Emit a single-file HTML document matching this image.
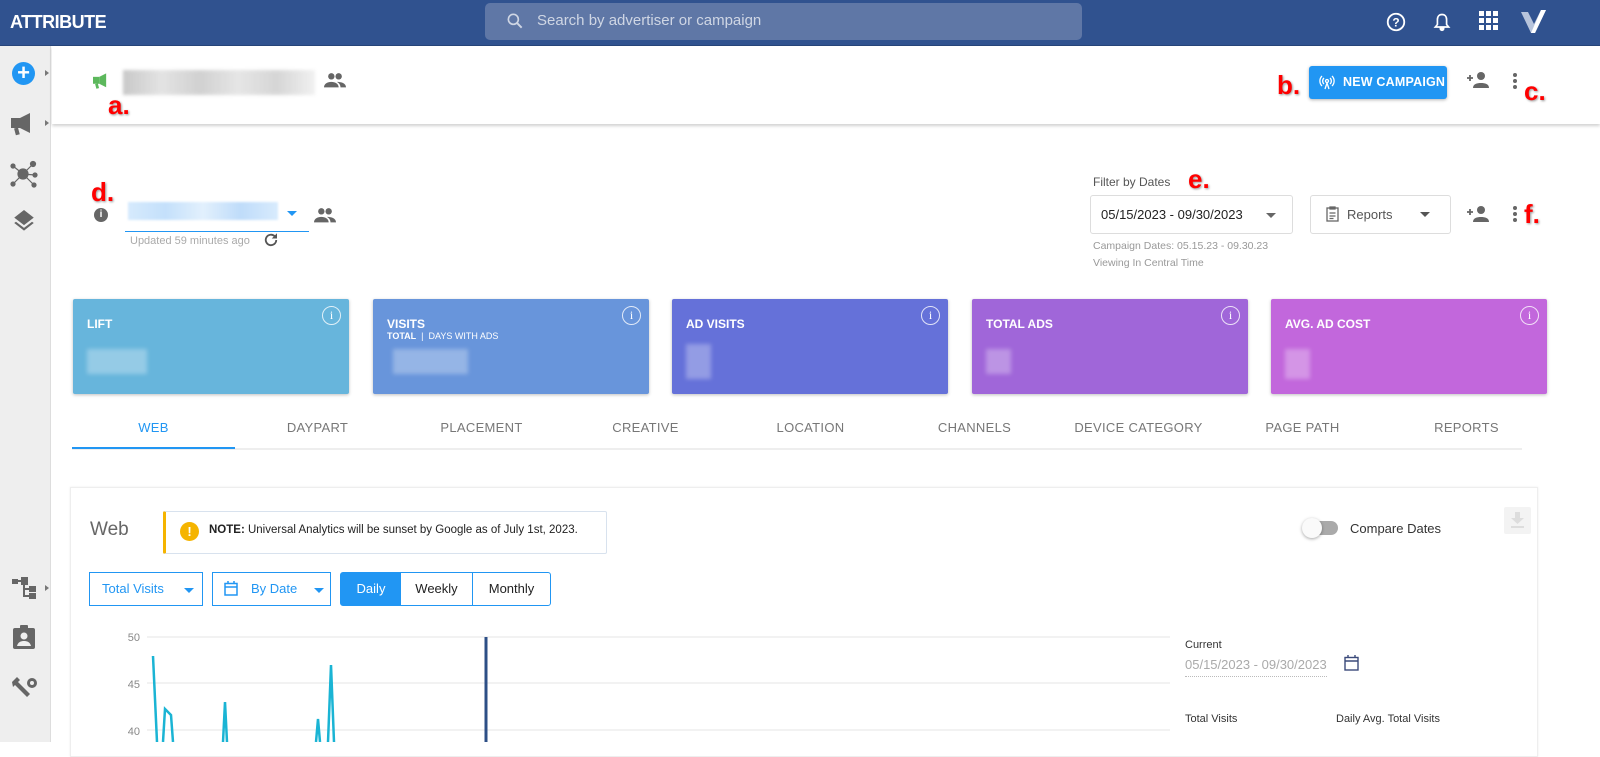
<!DOCTYPE html>
<html><head><meta charset="utf-8"><style>
*{box-sizing:border-box;margin:0;padding:0}
body{width:1600px;height:742px;overflow:hidden;font-family:"Liberation Sans",sans-serif;background:#fff;position:relative;color:#333}
.abs{position:absolute;white-space:nowrap}
.top{left:0;top:0;width:1600px;height:46px;background:#30528f;border-bottom:1px solid #27457a}
.side{left:0;top:46px;width:51px;height:696px;background:#eeeeee;border-right:1px solid #ddd}
.red{color:#f00;font-weight:bold;font-size:26px;text-shadow:1px 1px 2px #999}
.card{top:299px;width:276px;height:95px;border-radius:2px;box-shadow:0 1px 3px rgba(0,0,0,.25);color:#fff}
.card b{position:absolute;left:14px;top:18px;font-size:12px}
.card .i{position:absolute;right:8px;top:7px;width:19px;height:19px;border:1.5px solid rgba(255,255,255,.8);border-radius:50%;font-size:12px;text-align:center;line-height:16px;font-family:"Liberation Serif",serif}
.card .blur{position:absolute;left:14px;top:50px;width:60px;height:25px;background:rgba(255,255,255,.3);filter:blur(2px)}
.tab{top:420px;font-size:13px;color:#777;letter-spacing:.3px;text-align:center;width:163px}
.btn{border:1px solid #2196f3;height:34px;font-size:13px;line-height:32px}
</style></head><body>
<div class="abs top"></div>
<div class="abs" style="left:10px;top:12px;color:#fff;font-size:18px;font-weight:bold;letter-spacing:-.5px">ATTRIBUTE</div>
<div class="abs" style="left:485px;top:3px;width:597px;height:37px;background:#5f77a6;border-radius:5px"></div>
<svg class="abs" style="left:505px;top:11px" width="20" height="20" viewBox="0 0 24 24"><circle cx="10" cy="10" r="6" fill="none" stroke="#cfd6e4" stroke-width="2"/><path d="M14.5 14.5L20 20" stroke="#cfd6e4" stroke-width="2.3"/></svg>
<div class="abs" style="left:537px;top:12px;color:#cfd6e4;font-size:15px">Search by advertiser or campaign</div>
<svg class="abs" style="left:1385px;top:11px" width="22" height="22" viewBox="0 0 24 24"><circle cx="12" cy="12" r="9" fill="none" stroke="#fff" stroke-width="2"/><text x="12" y="17" font-size="13" fill="#fff" text-anchor="middle" font-family="Liberation Sans" font-weight="bold">?</text></svg>
<svg class="abs" style="left:1432px;top:11px" width="20" height="22" viewBox="0 0 24 24"><path d="M12 3c-3.5 0-5.5 2.5-5.5 6v6L4 18h16l-2.5-3V9c0-3.5-2-6-5.5-6zM10 20h4a2 2 0 01-4 0z" fill="none" stroke="#fff" stroke-width="2"/></svg>
<svg class="abs" style="left:1479px;top:11px" width="20" height="20" viewBox="0 0 20 20" fill="#fff"><rect x="0" y="0" width="5" height="5"/><rect x="7" y="0" width="5" height="5"/><rect x="14" y="0" width="5" height="5"/><rect x="0" y="7" width="5" height="5"/><rect x="7" y="7" width="5" height="5"/><rect x="14" y="7" width="5" height="5"/><rect x="0" y="14" width="5" height="5"/><rect x="7" y="14" width="5" height="5"/><rect x="14" y="14" width="5" height="5"/></svg>
<svg class="abs" style="left:1521px;top:10px" width="26" height="24" viewBox="0 0 26 24"><path d="M0 2h7l6 12 7-14h5L14 23h-4z" fill="#b7c4dc"/><path d="M10 23L20 0h5L14 23z" fill="#fff"/></svg>

<div class="abs side"></div>
<div class="abs" style="left:12px;top:62px;width:23px;height:23px;border-radius:50%;background:#2196f3;color:#fff;font-size:22px;line-height:22px;text-align:center;font-weight:bold">+</div>
<div class="abs" style="left:45px;top:70px;border-left:4px solid #777;border-top:3px solid transparent;border-bottom:3px solid transparent"></div>
<svg class="abs" style="left:10px;top:111px" width="28" height="26" viewBox="0 0 28 26" fill="#666"><rect x="1" y="7" width="9" height="10"/><path d="M10 7l10-5v20l-10-5z"/><rect x="4" y="17" width="4" height="7" transform="rotate(-15 6 17)"/></svg>
<div class="abs" style="left:45px;top:120px;border-left:4px solid #777;border-top:3px solid transparent;border-bottom:3px solid transparent"></div>
<svg class="abs" style="left:9px;top:160px" width="30" height="30" viewBox="0 0 30 30" fill="#666" stroke="#666" stroke-width="1.2"><circle cx="14" cy="14" r="5"/><circle cx="24" cy="4" r="2.5"/><circle cx="4" cy="6" r="2"/><circle cx="4" cy="24" r="2"/><circle cx="26" cy="15" r="2"/><circle cx="25" cy="25" r="2"/><path d="M14 14L24 4M14 14L4 6M14 14L4 24M14 14L26 15M14 14L25 25" fill="none"/></svg>
<svg class="abs" style="left:11px;top:210px" width="26" height="26" viewBox="0 0 24 24" fill="#666"><path d="M12 16.5l-7.4-5.7L3 12l9 7 9-7-1.6-1.2zM12 14l9-7-9-7-9 7z"/></svg>
<svg class="abs" style="left:12px;top:577px" width="26" height="22" viewBox="0 0 26 22" fill="#666"><rect x="0" y="2" width="6" height="5"/><rect x="9" y="0" width="7" height="8"/><rect x="17" y="9" width="7" height="6"/><rect x="17" y="16" width="7" height="6"/><path d="M6 4h4M12 8v11h5M12 12h5" stroke="#666" stroke-width="2" fill="none"/></svg>
<div class="abs" style="left:45px;top:585px;border-left:4px solid #777;border-top:3px solid transparent;border-bottom:3px solid transparent"></div>
<svg class="abs" style="left:13px;top:625px" width="22" height="24" viewBox="0 0 22 24" fill="#666"><rect x="0" y="3" width="22" height="21" rx="2"/><rect x="7" y="0" width="8" height="6" rx="1"/><circle cx="11" cy="11" r="3.5" fill="#eee"/><path d="M4 21c1-4 4-5 7-5s6 1 7 5z" fill="#eee"/></svg>
<svg class="abs" style="left:9px;top:674px" width="30" height="26" viewBox="0 0 30 26" fill="#666"><path d="M3 8l5-5 3 3-2 2 12 12-3 3L6 11 4 13z"/><circle cx="23" cy="9" r="5"/><circle cx="23" cy="9" r="2" fill="#eee"/></svg>

<div class="abs" style="left:52px;top:46px;width:1548px;height:78px;background:#fff;box-shadow:0 2px 3px rgba(0,0,0,.18)"></div>
<svg class="abs" style="left:92px;top:72px" width="20" height="18" viewBox="0 0 28 26" fill="#5cb85c"><rect x="1" y="7" width="9" height="10"/><path d="M10 7l10-5v20l-10-5z"/><rect x="4" y="17" width="4" height="7" transform="rotate(-15 6 17)"/></svg>
<div class="abs" style="left:123px;top:70px;width:192px;height:25px;background:linear-gradient(90deg,#bbb,#ddd,#c6c6c6,#e0e0e0,#ccc,#eee);filter:blur(1.5px);opacity:.8"></div>
<svg class="abs" style="left:324px;top:72px" width="22" height="16" viewBox="0 0 24 16" fill="#666"><circle cx="8" cy="4" r="3.5"/><circle cx="16" cy="4" r="3.5"/><path d="M0 16c0-4 4-6 8-6s8 2 8 6zM14 10c4 0 10 1 10 6h-6c0-3-2-5-4-6z"/></svg>
<div class="abs red" style="left:108px;top:90px">a.</div>
<div class="abs red" style="left:1277px;top:70px">b.</div>
<div class="abs" style="left:1309px;top:66px;width:138px;height:33px;background:#2196f3;border-radius:3px;box-shadow:0 1px 3px rgba(0,0,0,.3);color:#fff;font-weight:bold;font-size:12.5px;line-height:33px;padding-left:34px;letter-spacing:.2px">NEW CAMPAIGN</div>
<svg class="abs" style="left:1319px;top:74px" width="16" height="16" viewBox="0 0 16 16" fill="none" stroke="#fff" stroke-width="1.3"><circle cx="8" cy="7" r="1.5"/><path d="M5 4a4 4 0 000 6M11 4a4 4 0 010 6M3 2a7 7 0 000 10M13 2a7 7 0 010 10M8 9l-2 6M8 9l2 6"/></svg>
<svg class="abs" style="left:1467px;top:72px" width="22" height="16" viewBox="0 0 22 16" fill="#666"><path d="M0 6h6M3 3v6" stroke="#666" stroke-width="1.8"/><circle cx="14" cy="4" r="4"/><path d="M6 16c0-4 4-5 8-5s8 1 8 5z"/></svg>
<svg class="abs" style="left:1512px;top:72px" width="6" height="18" fill="#666"><circle cx="3" cy="3" r="2"/><circle cx="3" cy="9" r="2"/><circle cx="3" cy="15" r="2"/></svg>
<div class="abs red" style="left:1524px;top:76px">c.</div>

<div class="abs red" style="left:91px;top:177px">d.</div>
<div class="abs" style="left:94px;top:208px;width:14px;height:14px;border-radius:50%;background:#666;color:#fff;font-size:10px;text-align:center;line-height:14px;font-weight:bold">i</div>
<div class="abs" style="left:128px;top:202px;width:150px;height:18px;background:linear-gradient(90deg,#d6eafd,#c4e0fb,#e2f0fd,#bfdcfa,#d8ebfd);filter:blur(1px)"></div>
<div class="abs" style="left:287px;top:211px;border-top:5px solid #2196f3;border-left:5px solid transparent;border-right:5px solid transparent"></div>
<div class="abs" style="left:125px;top:231px;width:184px;height:1px;background:#2196f3"></div>
<svg class="abs" style="left:314px;top:207px" width="22" height="16" viewBox="0 0 24 16" fill="#666"><circle cx="8" cy="4" r="3.5"/><circle cx="16" cy="4" r="3.5"/><path d="M0 16c0-4 4-6 8-6s8 2 8 6zM14 10c4 0 10 1 10 6h-6c0-3-2-5-4-6z"/></svg>
<div class="abs" style="left:130px;top:235px;font-size:11px;color:#aaa">Updated 59 minutes ago</div>
<svg class="abs" style="left:262px;top:231px" width="18" height="18" viewBox="0 0 24 24"><path d="M19 12a7 7 0 11-2-5" fill="none" stroke="#555" stroke-width="2.4"/><path d="M20 3v7h-7z" fill="#555"/></svg>

<div class="abs" style="left:1093px;top:175px;font-size:12px;color:#555">Filter by Dates</div>
<div class="abs red" style="left:1188px;top:164px">e.</div>
<div class="abs" style="left:1090px;top:195px;width:203px;height:39px;border:1px solid #ddd;border-radius:3px;font-size:13px;line-height:37px;padding-left:10px;color:#222">05/15/2023 - 09/30/2023</div>
<div class="abs" style="left:1266px;top:213px;border-top:5px solid #666;border-left:5px solid transparent;border-right:5px solid transparent"></div>
<div class="abs" style="left:1093px;top:238px;font-size:10.5px;color:#999;line-height:17px">Campaign Dates: 05.15.23 - 09.30.23<br>Viewing In Central Time</div>
<div class="abs" style="left:1310px;top:195px;width:141px;height:39px;border:1px solid #ddd;border-radius:3px;font-size:13px;line-height:37px;padding-left:36px;color:#555">Reports</div>
<svg class="abs" style="left:1326px;top:206px" width="13" height="16" viewBox="0 0 13 16" fill="none" stroke="#666" stroke-width="1.3"><rect x="1" y="2" width="11" height="13"/><path d="M4 1h5v2H4zM3.5 7h6M3.5 10h6M3.5 12.5h4"/></svg>
<div class="abs" style="left:1420px;top:212px;border-top:5px solid #555;border-left:5px solid transparent;border-right:5px solid transparent"></div>
<svg class="abs" style="left:1467px;top:206px" width="22" height="16" viewBox="0 0 22 16" fill="#666"><path d="M0 6h6M3 3v6" stroke="#666" stroke-width="1.8"/><circle cx="14" cy="4" r="4"/><path d="M6 16c0-4 4-5 8-5s8 1 8 5z"/></svg>
<svg class="abs" style="left:1512px;top:205px" width="6" height="18" fill="#666"><circle cx="3" cy="3" r="2"/><circle cx="3" cy="9" r="2"/><circle cx="3" cy="15" r="2"/></svg>
<div class="abs red" style="left:1524px;top:199px">f.</div>

<div class="abs card" style="left:73px;background:#67b5dc"><b>LIFT</b><span class="i">i</span><div class="blur"></div></div>
<div class="abs card" style="left:373px;background:#6895db"><b>VISITS</b><div style="position:absolute;left:14px;top:32px;font-size:9px"><strong>TOTAL</strong> &nbsp;|&nbsp; DAYS WITH ADS</div><span class="i">i</span><div class="blur" style="left:20px;width:75px"></div></div>
<div class="abs card" style="left:672px;background:#6571d9"><b>AD VISITS</b><span class="i">i</span><div class="blur" style="width:25px;height:35px;top:45px"></div></div>
<div class="abs card" style="left:972px;background:#a066d9"><b>TOTAL ADS</b><span class="i">i</span><div class="blur" style="width:25px;height:25px"></div></div>
<div class="abs card" style="left:1271px;background:#c267dc"><b>AVG. AD COST</b><span class="i">i</span><div class="blur" style="width:25px;height:30px"></div></div>

<div class="abs tab" style="left:72px;color:#2196f3">WEB</div>
<div class="abs tab" style="left:236px">DAYPART</div>
<div class="abs tab" style="left:400px">PLACEMENT</div>
<div class="abs tab" style="left:564px">CREATIVE</div>
<div class="abs tab" style="left:729px">LOCATION</div>
<div class="abs tab" style="left:893px">CHANNELS</div>
<div class="abs tab" style="left:1057px">DEVICE CATEGORY</div>
<div class="abs tab" style="left:1221px">PAGE PATH</div>
<div class="abs tab" style="left:1385px">REPORTS</div>
<div class="abs" style="left:72px;top:448px;width:1450px;height:2px;background:#eee"></div>
<div class="abs" style="left:72px;top:447px;width:163px;height:2px;background:#2196f3"></div>

<div class="abs" style="left:70px;top:487px;width:1468px;height:270px;border:1px solid #eee;box-shadow:0 0 2px rgba(0,0,0,.08)"></div>
<div class="abs" style="left:90px;top:519px;font-size:19px;color:#666">Web</div>
<div class="abs" style="left:163px;top:511px;width:444px;height:43px;border:1px solid #d8e2ee;border-left:3px solid #f5b400;border-radius:2px"></div>
<div class="abs" style="left:180px;top:522px;width:19px;height:19px;border-radius:50%;background:#f5b400;color:#fff;font-size:13px;font-weight:bold;text-align:center;line-height:19px">!</div>
<div class="abs" style="left:209px;top:524px;font-size:11.5px;color:#222"><b>NOTE:</b> Universal Analytics will be sunset by Google as of July 1st, 2023.</div>
<div class="abs" style="left:1304px;top:521px;width:34px;height:14px;border-radius:7px;background:#aaa"></div>
<div class="abs" style="left:1302px;top:518px;width:20px;height:20px;border-radius:50%;background:#fafafa;box-shadow:0 1px 3px rgba(0,0,0,.35)"></div>
<div class="abs" style="left:1350px;top:521px;font-size:13px;color:#333">Compare Dates</div>
<div class="abs" style="left:1504px;top:507px;width:27px;height:27px;background:#f3f3f3;border-radius:2px"></div>
<svg class="abs" style="left:1510px;top:512px" width="15" height="16" viewBox="0 0 15 16" fill="#ddd"><path d="M5 0h5v6h4l-6.5 6L1 6h4z"/><rect x="1" y="14" width="13" height="2"/></svg>

<div class="abs btn" style="left:89px;top:572px;width:114px;color:#2196f3;padding-left:12px">Total Visits</div>
<div class="abs" style="left:184px;top:588px;border-top:5px solid #2196f3;border-left:5px solid transparent;border-right:5px solid transparent"></div>
<div class="abs btn" style="left:212px;top:572px;width:119px;color:#2196f3;padding-left:38px">By Date</div>
<svg class="abs" style="left:224px;top:581px" width="14" height="15" viewBox="0 0 14 15" fill="none" stroke="#2196f3" stroke-width="1.5"><rect x="1" y="2.5" width="12" height="11.5"/><path d="M1 6h12M4 0v3M10 0v3"/></svg>
<div class="abs" style="left:314px;top:588px;border-top:5px solid #2196f3;border-left:5px solid transparent;border-right:5px solid transparent"></div>
<div class="abs btn" style="left:340px;top:572px;width:211px;border-radius:3px"></div>
<div class="abs" style="left:341px;top:573px;width:60px;height:32px;background:#2196f3;color:#fff;font-size:13px;line-height:32px;text-align:center">Daily</div>
<div class="abs" style="left:401px;top:573px;width:72px;height:32px;border-right:1px solid #2196f3;font-size:13px;line-height:32px;text-align:center;color:#222">Weekly</div>
<div class="abs" style="left:473px;top:573px;width:77px;height:32px;font-size:13px;line-height:32px;text-align:center;color:#222">Monthly</div>

<svg class="abs" style="left:110px;top:625px" width="1060" height="117">
<text x="30" y="16" font-size="11" fill="#888" text-anchor="end" font-family="Liberation Sans">50</text>
<text x="30" y="63" font-size="11" fill="#888" text-anchor="end" font-family="Liberation Sans">45</text>
<text x="30" y="110" font-size="11" fill="#888" text-anchor="end" font-family="Liberation Sans">40</text>
<line x1="37" y1="12" x2="1060" y2="12" stroke="#e5e5e5"/>
<line x1="37" y1="58" x2="1060" y2="58" stroke="#e5e5e5"/>
<line x1="37" y1="105" x2="1060" y2="105" stroke="#e5e5e5"/>
<polyline points="43,31 47,117" fill="none" stroke="#1ab4d4" stroke-width="2.5"/>
<polyline points="53,117 55,84 61,90 63,117" fill="none" stroke="#1ab4d4" stroke-width="2.5"/>
<polyline points="113,117 115,77 117,117" fill="none" stroke="#1ab4d4" stroke-width="2.5"/>
<polyline points="206,117 208,94 210,117" fill="none" stroke="#1ab4d4" stroke-width="2.5"/>
<polyline points="218,117 221,40 224,117" fill="none" stroke="#1ab4d4" stroke-width="2.5"/>
<line x1="376" y1="12" x2="376" y2="117" stroke="#2d4f86" stroke-width="3"/>
</svg>

<div class="abs" style="left:1185px;top:639px;font-size:11px;color:#333">Current</div>
<div class="abs" style="left:1185px;top:657px;font-size:13px;color:#aaa;border-bottom:1px dotted #bbb;padding-bottom:4px">05/15/2023 - 09/30/2023</div>
<svg class="abs" style="left:1344px;top:655px" width="15" height="16" viewBox="0 0 15 16" fill="none" stroke="#3b4a7a" stroke-width="1.4"><rect x="1" y="2.5" width="13" height="12.5"/><path d="M1 6h13M4 0v3M11 0v3"/></svg>
<div class="abs" style="left:1185px;top:713px;font-size:11px;color:#333">Total Visits</div>
<div class="abs" style="left:1336px;top:713px;font-size:11px;color:#333">Daily Avg. Total Visits</div>
</body></html>
